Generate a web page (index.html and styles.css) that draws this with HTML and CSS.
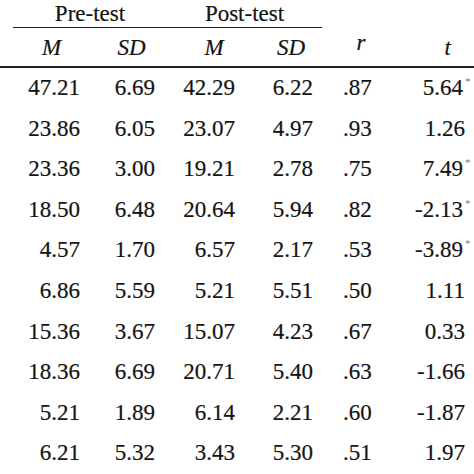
FILE: index.html
```html
<!DOCTYPE html>
<html>
<head>
<meta charset="utf-8">
<link rel="stylesheet" href="styles.css">
</head>
<body>
<div class="table">
  <div class="group pre">Pre-test</div>
  <div class="group post">Post-test</div>
  <div class="blank"></div>
  <div class="blank"></div>

  <div class="hd h1">M</div>
  <div class="hd h2">SD</div>
  <div class="hd h3">M</div>
  <div class="hd h4">SD</div>
  <div class="hd h5">r</div>
  <div class="hd h6">t</div>

  <div class="row">
    <div class="c c1">47.21</div><div class="c c2">6.69</div><div class="c c3">42.29</div><div class="c c4">6.22</div><div class="c c5">.87</div><div class="c c6">5.64<span class="star">*</span></div>
  </div>
  <div class="row">
    <div class="c c1">23.86</div><div class="c c2">6.05</div><div class="c c3">23.07</div><div class="c c4">4.97</div><div class="c c5">.93</div><div class="c c6">1.26</div>
  </div>
  <div class="row">
    <div class="c c1">23.36</div><div class="c c2">3.00</div><div class="c c3">19.21</div><div class="c c4">2.78</div><div class="c c5">.75</div><div class="c c6">7.49<span class="star">*</span></div>
  </div>
  <div class="row">
    <div class="c c1">18.50</div><div class="c c2">6.48</div><div class="c c3">20.64</div><div class="c c4">5.94</div><div class="c c5">.82</div><div class="c c6">-2.13<span class="star">*</span></div>
  </div>
  <div class="row">
    <div class="c c1">4.57</div><div class="c c2">1.70</div><div class="c c3">6.57</div><div class="c c4">2.17</div><div class="c c5">.53</div><div class="c c6">-3.89<span class="star">*</span></div>
  </div>
  <div class="row">
    <div class="c c1">6.86</div><div class="c c2">5.59</div><div class="c c3">5.21</div><div class="c c4">5.51</div><div class="c c5">.50</div><div class="c c6">1.11</div>
  </div>
  <div class="row">
    <div class="c c1">15.36</div><div class="c c2">3.67</div><div class="c c3">15.07</div><div class="c c4">4.23</div><div class="c c5">.67</div><div class="c c6">0.33</div>
  </div>
  <div class="row">
    <div class="c c1">18.36</div><div class="c c2">6.69</div><div class="c c3">20.71</div><div class="c c4">5.40</div><div class="c c5">.63</div><div class="c c6">-1.66</div>
  </div>
  <div class="row">
    <div class="c c1">5.21</div><div class="c c2">1.89</div><div class="c c3">6.14</div><div class="c c4">2.21</div><div class="c c5">.60</div><div class="c c6">-1.87</div>
  </div>
  <div class="row">
    <div class="c c1">6.21</div><div class="c c2">5.32</div><div class="c c3">3.43</div><div class="c c4">5.30</div><div class="c c5">.51</div><div class="c c6">1.97</div>
  </div>
</div>
</body>
</html>
```

FILE: styles.css
```css
html, body {
  margin: 0;
  padding: 0;
  background: #ffffff;
  overflow: hidden;
}

.table {
  width: 474px;
  display: grid;
  grid-template-columns: 90px 77px 78px 77px 78px 74px;
  font-family: "Liberation Serif", "Times New Roman", serif;
  font-size: 23px;
  color: #141414;
  -webkit-text-stroke: 0.2px #141414;
}

.group {
  grid-column: span 2;
  text-align: center;
  line-height: 27px;
  height: 27px;
  border-bottom: 1px solid #222;
}

.group.pre {
  margin-left: 13px;
}

.blank {
  height: 27px;
}

.hd {
  font-style: italic;
  line-height: 27px;
  padding-top: 6px;
  padding-bottom: 5px;
  border-bottom: 2px solid #222;
  text-align: center;
}

.h1 { padding-left: 13px; }
.h2 { padding-left: 6px; }
.h3 { padding-left: 16px; }
.h4 { padding-left: 15px; }
.h5 { padding-top: 1px; padding-bottom: 10px; }
.h6 { text-align: right; padding-right: 23px; }

.row {
  display: contents;
}

.c {
  line-height: 40.6px;
  text-align: right;
  white-space: nowrap;
}

.c1 { padding-right: 10px; }
.c2 { padding-right: 12px; }
.c3 { padding-right: 10px; }
.c4 { padding-right: 9px; }
.c5 { text-align: left; padding-left: 21px; }
.c6 { padding-right: 9px; }

.star {
  display: inline-block;
  width: 0;
  font-size: 11px;
  line-height: 0;
  vertical-align: 10px;
  color: #777;
  -webkit-text-stroke: 0;
  padding-left: 2px;
}
```
